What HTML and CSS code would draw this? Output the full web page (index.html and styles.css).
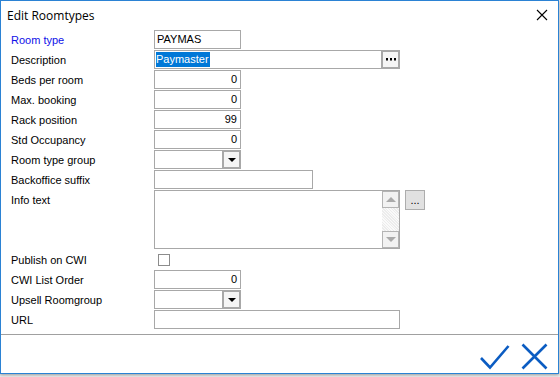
FILE: index.html
```html
<!DOCTYPE html>
<html lang="en">
<head>
  <meta charset="UTF-8">
  <title>Edit Roomtypes</title>
  <link rel="stylesheet" href="styles.css">
</head>
<body>
  <div class="window">
    <div class="titlebar">
      <span class="title">Edit Roomtypes</span>
      <svg class="close" width="12" height="12" viewBox="0 0 12 12">
        <path d="M1 1 L11 11 M11 1 L1 11" stroke="#000" stroke-width="1.1" fill="none"/>
      </svg>
    </div>

    <div class="form">
      <div class="row">
        <label class="label key">Room type</label>
        <div class="field short">PAYMAS</div>
      </div>
      <div class="row">
        <label class="label">Description</label>
        <div class="field wide combo">
          <span class="combo-text"><span class="selected">Paymaster</span></span>
          <span class="combo-btn">
            <svg width="10" height="3" viewBox="0 0 10 3">
              <rect x="0" y="0" width="2" height="2.5" fill="#000"/>
              <rect x="4" y="0" width="2" height="2.5" fill="#000"/>
              <rect x="8" y="0" width="2" height="2.5" fill="#000"/>
            </svg>
          </span>
        </div>
      </div>
      <div class="row">
        <label class="label">Beds per room</label>
        <div class="field short num">0</div>
      </div>
      <div class="row">
        <label class="label">Max. booking</label>
        <div class="field short num">0</div>
      </div>
      <div class="row">
        <label class="label">Rack position</label>
        <div class="field short num">99</div>
      </div>
      <div class="row">
        <label class="label">Std Occupancy</label>
        <div class="field short num">0</div>
      </div>
      <div class="row">
        <label class="label">Room type group</label>
        <div class="field short combo">
          <span class="combo-text"></span>
          <span class="combo-btn"><span class="arrow-down"></span></span>
        </div>
      </div>
      <div class="row">
        <label class="label">Backoffice suffix</label>
        <div class="field medium"></div>
      </div>
      <div class="row tall">
        <label class="label">Info text</label>
        <div class="memo">
          <div class="memo-text"></div>
          <div class="scrollbar">
            <span class="scroll-btn"><span class="tri-up"></span></span>
            <span class="scroll-track"></span>
            <span class="scroll-btn"><span class="tri-down"></span></span>
          </div>
        </div>
        <button class="dots-btn">...</button>
      </div>
      <div class="row">
        <label class="label">Publish on CWI</label>
        <span class="checkbox"></span>
      </div>
      <div class="row">
        <label class="label">CWI List Order</label>
        <div class="field short num">0</div>
      </div>
      <div class="row">
        <label class="label">Upsell Roomgroup</label>
        <div class="field short combo">
          <span class="combo-text"></span>
          <span class="combo-btn"><span class="arrow-down"></span></span>
        </div>
      </div>
      <div class="row">
        <label class="label">URL</label>
        <div class="field wide"></div>
      </div>
    </div>

    <div class="footer">
      <svg class="ok" width="30" height="26" viewBox="0 0 30 26">
        <path d="M1 14 L10 23.5 L28.5 2" stroke="#0b5cc2" stroke-width="2.6" fill="none"/>
      </svg>
      <svg class="cancel" width="27" height="27" viewBox="0 0 27 27">
        <path d="M1.5 1.5 L25.5 25.5 M25.5 1.5 L1.5 25.5" stroke="#0b5cc2" stroke-width="2.6" fill="none"/>
      </svg>
    </div>
  </div>
</body>
</html>
```

FILE: styles.css
```css
body {
  margin: 0;
  width: 560px;
  height: 377px;
  background-color: #ececec;
  font-family: "Liberation Sans", Arial, sans-serif;
  font-size: 11px;
  color: #000;
  overflow: hidden;
}

.window {
  box-sizing: border-box;
  width: 559px;
  height: 374px;
  border: 1px solid #2b82d4;
  background-color: #fff;
  box-shadow: 0 1px 3px rgba(0, 0, 0, 0.35);
  display: flex;
  flex-direction: column;
}

.titlebar {
  height: 26px;
  display: flex;
  justify-content: space-between;
  align-items: center;
  padding: 0 10px 0 6px;
}

.title {
  font-family: "Open Sans", "Liberation Sans", sans-serif;
  font-size: 12px;
  margin-top: 2px;
}

.close {
  margin-top: 2px;
}

.form {
  padding: 3px 0 0 10px;
  display: flex;
  flex-direction: column;
}

.row {
  height: 20px;
  display: flex;
  align-items: flex-start;
}

.row.tall {
  height: 60px;
}

.label {
  width: 143px;
  line-height: 19px;
  padding-top: 1px;
  white-space: nowrap;
}

.label.key {
  color: #1010e8;
}

.field {
  box-sizing: border-box;
  height: 19px;
  border: 1px solid #a8a8a8;
  line-height: 17px;
  padding: 0 2px;
  background-color: #fff;
}

.short { width: 87px; }
.medium { width: 159px; }
.wide { width: 246px; }

.num {
  text-align: right;
  padding-right: 3px;
}

.combo {
  display: flex;
  padding: 0;
}

.combo-text {
  flex: 1;
  padding-left: 1px;
}

.selected {
  background-color: #0078d7;
  color: #fff;
  padding: 1px 1px 2px 0;
}

.combo-btn {
  box-sizing: border-box;
  width: 19px;
  height: 19px;
  margin: -1px -1px 0 0;
  border: 2px solid #a8a8a8;
  background-color: #f5f5f5;
  display: flex;
  align-items: center;
  justify-content: center;
}

.arrow-down {
  width: 0;
  height: 0;
  border-left: 4px solid transparent;
  border-right: 4px solid transparent;
  border-top: 4px solid #000;
  margin-top: 1px;
}

.memo {
  box-sizing: border-box;
  width: 246px;
  height: 59px;
  border: 1px solid #a8a8a8;
  display: flex;
}

.memo-text {
  flex: 1;
}

.scrollbar {
  width: 17px;
  display: flex;
  flex-direction: column;
}

.scroll-btn {
  box-sizing: border-box;
  height: 17px;
  border: 1px solid #b4b4b4;
  background-color: #f2f2f2;
  display: flex;
  align-items: center;
  justify-content: center;
}

.scroll-track {
  flex: 1;
  background-color: #f4f4f4;
  background-image: repeating-linear-gradient(45deg, #ececec 0 1px, #fafafa 1px 2px);
}

.tri-up,
.tri-down {
  width: 0;
  height: 0;
  border-left: 5px solid transparent;
  border-right: 5px solid transparent;
}

.tri-up { border-bottom: 5px solid #aaa; }
.tri-down { border-top: 5px solid #aaa; }

.dots-btn {
  box-sizing: border-box;
  width: 20px;
  height: 20px;
  margin-left: 5px;
  padding: 0;
  border: 1px solid #adadad;
  background-color: #e1e1e1;
  font-family: "Liberation Sans", Arial, sans-serif;
  font-size: 11px;
  color: #000;
}

.checkbox {
  box-sizing: border-box;
  width: 12px;
  height: 12px;
  margin: 4px 0 0 4px;
  border: 1px solid #8c8c8c;
  background-color: #fff;
}

.footer {
  margin-top: 4px;
  border-top: 1px solid #a0a0a0;
  flex: 1;
  display: flex;
  justify-content: flex-end;
  align-items: flex-start;
  gap: 11px;
  padding: 8px 10px 0 0;
}

.ok {
  margin-top: 1px;
}
```
